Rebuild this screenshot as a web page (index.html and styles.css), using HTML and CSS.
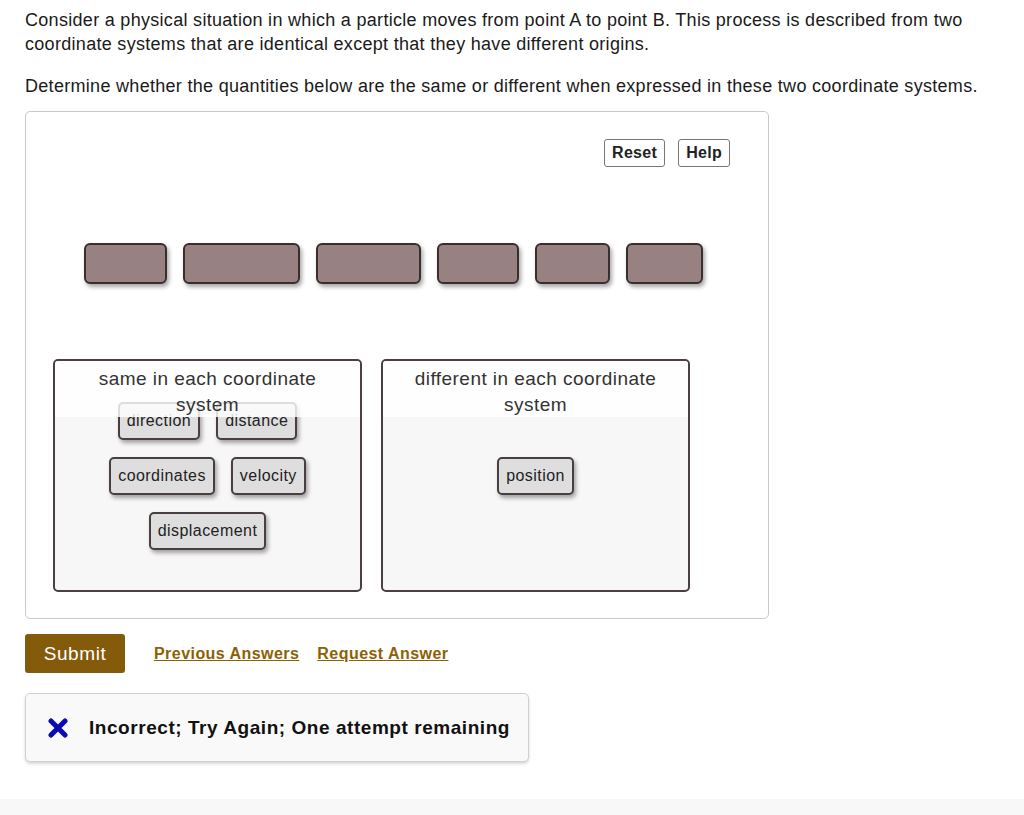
FILE: index.html
```html
<!DOCTYPE html>
<html lang="en">
<head>
<meta charset="UTF-8" />
<title>Coordinate Systems</title>
<link rel="stylesheet" href="styles.css">
</head>
<body>
  <div class="problem">
    <p class="intro">Consider a physical situation in which a particle moves from point A to point B. This process is described from two coordinate systems that are identical except that they have different origins.</p>
    <p class="prompt">Determine whether the quantities below are the same or different when expressed in these two coordinate systems.</p>

    <div class="sorter">
      <div class="toolbar">
        <button class="tool-btn">Reset</button>
        <button class="tool-btn">Help</button>
      </div>

      <div class="slots">
        <div class="slot w83"></div>
        <div class="slot w117"></div>
        <div class="slot w105"></div>
        <div class="slot w82"></div>
        <div class="slot w75"></div>
        <div class="slot w77"></div>
      </div>

      <div class="bins">
        <div class="bin">
          <div class="bin-title">same in each coordinate system</div>
          <div class="chips">
            <div class="chip-row">
              <span class="chip">direction</span>
              <span class="chip">distance</span>
            </div>
            <div class="chip-row">
              <span class="chip">coordinates</span>
              <span class="chip">velocity</span>
            </div>
            <div class="chip-row">
              <span class="chip">displacement</span>
            </div>
          </div>
        </div>
        <div class="bin">
          <div class="bin-title">different in each coordinate system</div>
          <div class="chips">
            <div class="chip-row">
              <span class="chip">position</span>
            </div>
          </div>
        </div>
      </div>
    </div>

    <div class="actions">
      <button class="submit">Submit</button>
      <a href="#" class="link">Previous Answers</a>
      <a href="#" class="link">Request Answer</a>
    </div>

    <div class="feedback">
      <svg class="x-icon" width="20" height="20" viewBox="0 0 20 20" aria-hidden="true">
        <path d="M3 3 L17 17 M17 3 L3 17" stroke="#0a0ab4" stroke-width="5" stroke-linecap="round"/>
      </svg>
      <span>Incorrect; Try Again; One attempt remaining</span>
    </div>
  </div>
  <div class="footer-strip"></div>
</body>
</html>
```

FILE: styles.css
```css
* {
  box-sizing: border-box;
}
body {
  margin: 0;
  background: #fff;
  font-family: 'Liberation Sans', Arial, Helvetica, sans-serif;
  color: #1a1a1a;
}

.problem {
  padding: 8px 25px 0;
  height: 799px;
}

.intro,
.prompt {
  margin: 0;
  font-size: 18px;
  letter-spacing: 0.3px;
  line-height: 24px;
}
.prompt {
  margin-top: 18px;
}

/* Sorting widget */
.sorter {
  margin-top: 13px;
  width: 744px;
  height: 508px;
  border: 1px solid #c9c9c9;
  border-radius: 5px;
  padding: 27px 38px 0 27px;
}

.toolbar {
  display: flex;
  justify-content: flex-end;
  gap: 13px;
}
.tool-btn {
  font-family: inherit;
  font-size: 16px;
  font-weight: 700;
  letter-spacing: 0.3px;
  color: #222;
  background: #fff;
  border: 1px solid #777;
  border-radius: 3px;
  height: 28px;
  padding: 0 7px;
}

.slots {
  display: flex;
  gap: 16px;
  margin-top: 76px;
  padding-left: 31px;
}
.slot {
  height: 41px;
  background: #978281;
  border: 2px solid #3a2e2e;
  border-radius: 6px;
  box-shadow: 2px 3px 4px rgba(0,0,0,0.35);
}
.w83 { width: 83px; }
.w117 { width: 117px; }
.w105 { width: 105px; }
.w82 { width: 82px; }
.w75 { width: 75px; }
.w77 { width: 77px; }

.bins {
  display: flex;
  gap: 19px;
  margin-top: 75px;
}
.bin {
  position: relative;
  width: 309px;
  height: 233px;
  border: 2px solid #4a4040;
  border-radius: 5px;
  background: #f7f7f7;
  display: flex;
  align-items: center;
  justify-content: center;
}
.bin-title {
  position: absolute;
  top: 0;
  left: 0;
  right: 0;
  height: 56px;
  padding: 5px 20px 0;
  background: rgba(255,255,255,0.82);
  text-align: center;
  font-size: 19px;
  letter-spacing: 0.45px;
  line-height: 26px;
  color: #333;
  z-index: 1;
  border-radius: 3px 3px 0 0;
}

.chips {
  display: flex;
  flex-direction: column;
  align-items: center;
  gap: 17px;
  margin-top: 1px;
}
.chip-row {
  display: flex;
  justify-content: center;
  gap: 16px;
}
.chip {
  height: 38px;
  line-height: 34px;
  padding: 0 7px;
  font-size: 16px;
  letter-spacing: 0.45px;
  color: #222;
  background: #dedede;
  border: 2px solid #4a3f3f;
  border-radius: 5px;
  box-shadow: 2px 3px 4px rgba(0,0,0,0.35);
}

/* Actions */
.actions {
  display: flex;
  align-items: center;
  margin-top: 15px;
}
.submit {
  font-family: inherit;
  font-size: 19px;
  letter-spacing: 0.6px;
  color: #fff;
  background: #835b0b;
  border: none;
  border-radius: 3px;
  width: 100px;
  height: 39px;
  padding: 0;
}
.link {
  font-size: 16px;
  font-weight: 700;
  letter-spacing: 0.45px;
  color: #8b6203;
  margin-left: 29px;
}
.link + .link {
  margin-left: 18px;
}

.feedback {
  margin-top: 20px;
  width: 504px;
  height: 69px;
  display: flex;
  align-items: center;
  gap: 21px;
  padding-left: 22px;
  background: #f9f9f9;
  border: 1px solid #cfcfcf;
  border-radius: 5px;
  box-shadow: 0 2px 3px rgba(0,0,0,0.15);
  font-size: 19px;
  font-weight: 700;
  letter-spacing: 0.55px;
  color: #111;
}

.footer-strip {
  height: 16px;
  background: #f8f8f8;
}
```
